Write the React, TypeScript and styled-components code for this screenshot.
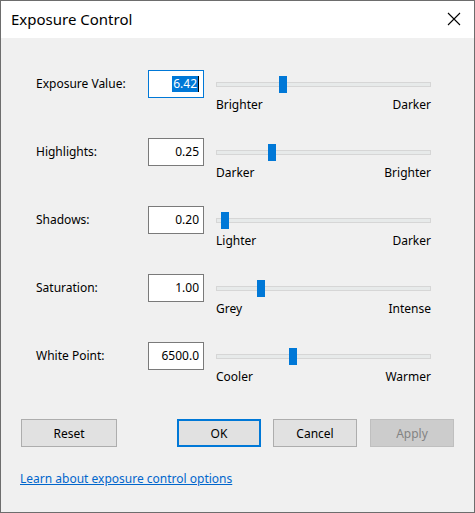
import React from "react";
import styled, { createGlobalStyle } from "styled-components";

const Global = createGlobalStyle`
  html, body { margin: 0; padding: 0; background: #f0f0f0; }
  * { box-sizing: border-box; }
`;

const FONT = `"Segoe UI", "Noto Sans", "DejaVu Sans", sans-serif`;

const Window = styled.div`
  width: 475px;
  height: 513px;
  border: 1px solid #6d6d6d;
  display: flex;
  flex-direction: column;
  font-family: ${FONT};
  font-size: 12px;
  color: #000;
  background: #f0f0f0;
  overflow: hidden;
`;

const TitleBar = styled.div`
  flex-shrink: 0;
  height: 37px;
  background: #fff;
  display: flex;
  align-items: center;
  justify-content: space-between;
  padding: 0 13px 2px 10px;
`;

const Title = styled.div`
  font-size: 15px;
  color: #000;
`;

const Body = styled.div`
  flex: 1;
  display: flex;
  flex-direction: column;
  padding: 32px 0 0 0;
`;

const Rows = styled.div`
  display: flex;
  flex-direction: column;
  gap: 25px;
  padding-left: 35px;
`;

const Row = styled.div`
  display: grid;
  grid-template-columns: 100px 56px 215px;
  column-gap: 12px;
  grid-template-rows: 28px auto;
  align-items: center;
`;

const Label = styled.div`
  grid-column: 1;
  grid-row: 1;
  line-height: 16px;
`;

const Field = styled.div<{ $active?: boolean }>`
  grid-column: 2;
  grid-row: 1;
  height: 28px;
  background: #fff;
  border: 1px solid ${(p) => (p.$active ? "#0078d7" : "#7a7a7a")};
  display: flex;
  align-items: center;
  justify-content: flex-end;
  padding-right: 4px;
  line-height: 16px;
`;

const Selected = styled.span`
  background: #0078d7;
  color: #fff;
  padding: 0 1px;
  border-right: 1px solid #000;
`;

const Track = styled.div`
  grid-column: 3;
  grid-row: 1;
  position: relative;
  height: 5px;
  background: #e7eaea;
  border: 1px solid #d6d6d6;
`;

const Thumb = styled.div`
  position: absolute;
  top: -7px;
  width: 8px;
  height: 17px;
  background: #0078d7;
`;

const Ends = styled.div`
  grid-column: 3;
  grid-row: 2;
  display: flex;
  justify-content: space-between;
  line-height: 16px;
  margin-top: -1px;
`;

const Buttons = styled.div`
  display: flex;
  padding: 34px 0 0 20px;
`;

const Button = styled.button<{ $primary?: boolean; $wide?: boolean; $gap?: number }>`
  font-family: ${FONT};
  font-size: 12px;
  width: ${(p) => (p.$wide ? "96px" : "84px")};
  height: 28px;
  margin-left: ${(p) => p.$gap ?? 0}px;
  background: #e1e1e1;
  border: ${(p) => (p.$primary ? "2px solid #0078d7" : "1px solid #adadad")};
  color: #000;
  padding: 0;
  &:disabled {
    background: #cccccc;
    border-color: #bfbfbf;
    color: #838383;
  }
`;

const Link = styled.a`
  margin: 24px 0 0 19px;
  color: #0066cc;
  text-decoration: underline;
  line-height: 16px;
  align-self: flex-start;
  cursor: pointer;
`;

const CloseIcon = () => (
  <svg width="14" height="14" viewBox="0 0 14 14">
    <path d="M1 1 L13 13 M13 1 L1 13" stroke="#000" strokeWidth="1.1" fill="none" />
  </svg>
);

const rows = [
  { label: "Exposure Value:", value: "6.42", active: true, pos: 63, left: "Brighter", right: "Darker" },
  { label: "Highlights:", value: "0.25", pos: 52, left: "Darker", right: "Brighter" },
  { label: "Shadows:", value: "0.20", pos: 5, left: "Lighter", right: "Darker" },
  { label: "Saturation:", value: "1.00", pos: 41, left: "Grey", right: "Intense" },
  { label: "White Point:", value: "6500.0", pos: 73, left: "Cooler", right: "Warmer" },
];

export default function App() {
  return (
    <>
      <Global />
      <Window>
        <TitleBar>
          <Title>Exposure Control</Title>
          <CloseIcon />
        </TitleBar>
        <Body>
          <Rows>
            {rows.map((r) => (
              <Row key={r.label}>
                <Label>{r.label}</Label>
                <Field $active={r.active}>
                  {r.active ? <Selected>{r.value}</Selected> : r.value}
                </Field>
                <Track>
                  <Thumb style={{ left: r.pos - 1 }} />
                </Track>
                <Ends>
                  <span>{r.left}</span>
                  <span>{r.right}</span>
                </Ends>
              </Row>
            ))}
          </Rows>
          <Buttons>
            <Button $wide>Reset</Button>
            <Button $primary $gap={60}>OK</Button>
            <Button $gap={12}>Cancel</Button>
            <Button $gap={13} disabled>Apply</Button>
          </Buttons>
          <Link>Learn about exposure control options</Link>
        </Body>
      </Window>
    </>
  );
}
